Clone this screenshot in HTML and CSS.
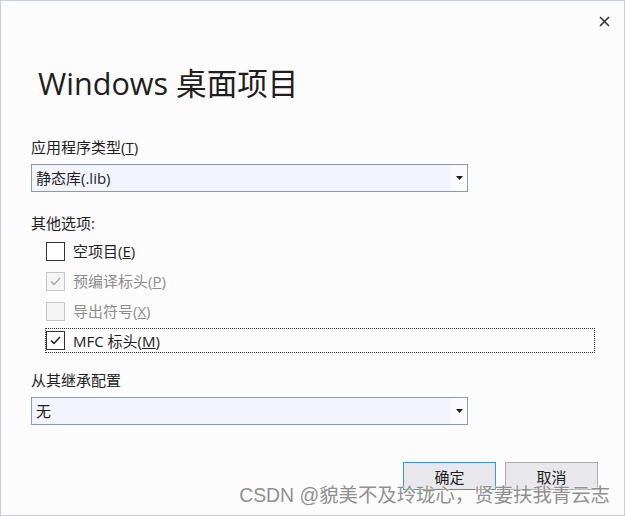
FILE: index.html
```html
<!DOCTYPE html>
<html lang="zh-CN">
<head>
<meta charset="utf-8">
<title>Windows 桌面项目</title>
<link rel="stylesheet" href="styles.css">
</head>
<body>
<div class="window">
  <div class="topbar">
    <span class="close" aria-label="关闭">
      <svg width="11" height="11" viewBox="0 0 11 11"><path d="M1 1L10 10M10 1L1 10" stroke="#333" stroke-width="1.6" fill="none"/></svg>
    </span>
  </div>
  <h1 class="title">Windows 桌面项目</h1>

  <div class="field">
    <div class="label">应用程序类型(<u>T</u>)</div>
    <div class="select">
      <span class="select-text">静态库(.lib)</span>
      <span class="arrow"><svg width="7" height="4" viewBox="0 0 7 4"><path d="M0 0H7L3.5 4Z" fill="#1e1e1e"/></svg></span>
    </div>
  </div>

  <div class="group">
    <div class="label group-label">其他选项:</div>
    <div class="checks">
      <div class="check">
        <span class="box"></span>
        <span class="check-text">空项目(<u>E</u>)</span>
      </div>
      <div class="check disabled">
        <span class="box"><svg width="11" height="9" viewBox="0 0 11 9"><path d="M1 4.5L4 7.5L10 1" stroke="#a8a8a8" stroke-width="1.4" fill="none"/></svg></span>
        <span class="check-text">预编译标头(<u>P</u>)</span>
      </div>
      <div class="check disabled">
        <span class="box"></span>
        <span class="check-text">导出符号(<u>X</u>)</span>
      </div>
      <div class="check focused">
        <span class="box"><svg width="11" height="9" viewBox="0 0 11 9"><path d="M1 4.5L4 7.5L10 1" stroke="#1e1e1e" stroke-width="1.5" fill="none"/></svg></span>
        <span class="check-text">MFC 标头(<u>M</u>)</span>
      </div>
    </div>
  </div>

  <div class="field field2">
    <div class="label">从其继承配置</div>
    <div class="select">
      <span class="select-text">无</span>
      <span class="arrow"><svg width="7" height="4" viewBox="0 0 7 4"><path d="M0 0H7L3.5 4Z" fill="#1e1e1e"/></svg></span>
    </div>
  </div>

  <div class="buttons">
    <button class="btn primary">确定</button>
    <button class="btn">取消</button>
  </div>

  <div class="watermark">CSDN @貌美不及玲珑心，贤妻扶我青云志</div>
</div>
</body>
</html>
```

FILE: styles.css
```css
* { box-sizing: border-box; }
html, body { margin: 0; padding: 0; }
body {
  font-family: "Open Sans", "Noto Sans CJK SC", sans-serif;
  color: #1e1e1e;
  background: #fcfcfc;
}
.window {
  position: relative;
  width: 625px;
  height: 516px;
  border: 1px solid #c9cde0;
  background: #fcfcfc;
  padding: 0 0 0 30px;
}
.topbar {
  display: flex;
  justify-content: flex-end;
  height: 42px;
  padding: 15px 14px 0 0;
}
.close { display: flex; width: 11px; height: 11px; }
.title {
  margin: 0;
  padding: 20px 0 0 7px;
  font-weight: normal;
  font-size: 30.6px;
  line-height: 40px;
  height: 94px;
}
.label {
  font-size: 15px;
  line-height: 20px;
  height: 27px;
}
.group-label { height: 23px; }
.select {
  display: flex;
  align-items: center;
  width: 437px;
  height: 28px;
  border: 1px solid #8a99b3;
  background: #f2f5fd;
}
.select-text {
  flex: 1;
  font-size: 15px;
  padding-left: 4px;
  line-height: 20px;
}
.arrow {
  display: flex;
  align-items: center;
  justify-content: center;
  width: 16px;
  height: 100%;
  background: #fbfbfd;
}
.group { margin-top: 21px; }
.check {
  display: flex;
  align-items: center;
  height: 30px;
  margin-left: 15px;
  width: 548px;
}
.box {
  display: flex;
  align-items: center;
  justify-content: center;
  width: 19px;
  height: 19px;
  border: 1px solid #333;
  background: #fff;
}
.check-text {
  font-size: 15px;
  margin-left: 8px;
  line-height: 20px;
}
.disabled .box { border-color: #c6c6c6; background: #f5f5f5; }
.disabled .check-text { color: #8c8c8c; }
.focused {
  height: 23px;
  margin-top: 3px;
  outline: 1px dotted #333;
}
.field2 { margin-top: 18px; }
.buttons {
  display: flex;
  justify-content: flex-end;
  gap: 9px;
  margin-top: 37px;
  padding-right: 26px;
}
.btn {
  width: 93px;
  height: 28px;
  border: 1px solid #adadad;
  background: #e8e8ec;
  font-family: "Open Sans", "Noto Sans CJK SC", sans-serif;
  font-size: 15px;
  color: #1e1e1e;
  padding: 0;
}
.btn.primary { border-color: #3c91e6; }
.watermark {
  position: absolute;
  right: 14px;
  bottom: 8px;
  font-family: "Liberation Sans", "Noto Sans CJK SC", sans-serif;
  font-size: 19.4px;
  line-height: 24px;
  color: #8f8f8f;
  text-shadow: 0 0 1px #fff, 0 0 2px #fff;
  white-space: nowrap;
}
```
